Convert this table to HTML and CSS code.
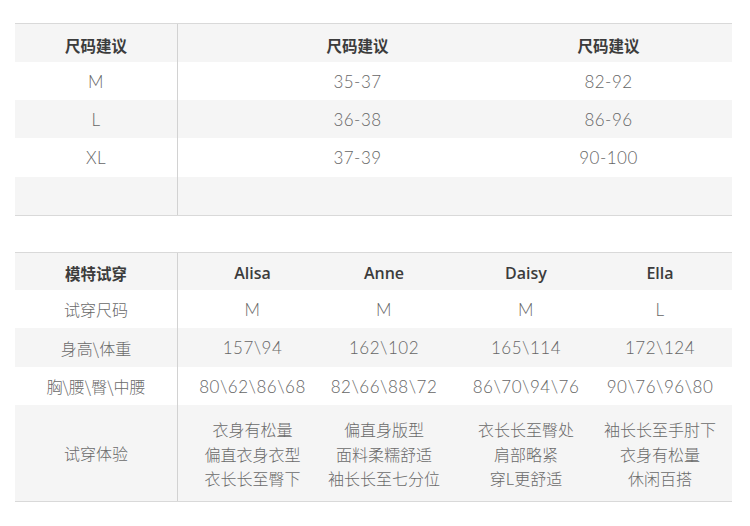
FILE: index.html
```html
<!DOCTYPE html>
<html lang="zh">
<head>
<meta charset="utf-8">
<link rel="stylesheet" href="styles.css">
</head>
<body>
<div class="page">
  <div class="table size-table">
    <div class="row head gray">
      <div class="cell label">尺码建议</div>
      <div class="cell">尺码建议</div>
      <div class="cell c3">尺码建议</div>
    </div>
    <div class="row">
      <div class="cell label num">M</div>
      <div class="cell num">35-37</div>
      <div class="cell c3 num">82-92</div>
    </div>
    <div class="row gray">
      <div class="cell label num">L</div>
      <div class="cell num">36-38</div>
      <div class="cell c3 num">86-96</div>
    </div>
    <div class="row tall">
      <div class="cell label num">XL</div>
      <div class="cell num">37-39</div>
      <div class="cell c3 num">90-100</div>
    </div>
    <div class="row gray">
      <div class="cell label"></div>
      <div class="cell"></div>
      <div class="cell c3"></div>
    </div>
  </div>

  <div class="table model-table">
    <div class="row head gray short">
      <div class="cell label">模特试穿</div>
      <div class="cell en">Alisa</div>
      <div class="cell en">Anne</div>
      <div class="cell en">Daisy</div>
      <div class="cell en c5">Ella</div>
    </div>
    <div class="row">
      <div class="cell label">试穿尺码</div>
      <div class="cell num">M</div>
      <div class="cell num">M</div>
      <div class="cell num">M</div>
      <div class="cell c5 num">L</div>
    </div>
    <div class="row gray tall">
      <div class="cell label">身高\体重</div>
      <div class="cell num">157\94</div>
      <div class="cell num">162\102</div>
      <div class="cell num">165\114</div>
      <div class="cell c5 num">172\124</div>
    </div>
    <div class="row">
      <div class="cell label">胸\腰\臀\中腰</div>
      <div class="cell num">80\62\86\68</div>
      <div class="cell num">82\66\88\72</div>
      <div class="cell num">86\70\94\76</div>
      <div class="cell c5 num">90\76\96\80</div>
    </div>
    <div class="row gray exp">
      <div class="cell label">试穿体验</div>
      <div class="cell multi">衣身有松量<br>偏直衣身衣型<br>衣长长至臀下</div>
      <div class="cell multi">偏直身版型<br>面料柔糯舒适<br>袖长长至七分位</div>
      <div class="cell multi">衣长长至臀处<br>肩部略紧<br>穿L更舒适</div>
      <div class="cell multi c5">袖长长至手肘下<br>衣身有松量<br>休闲百搭</div>
    </div>
  </div>
</div>
</body>
</html>
```

FILE: styles.css
```css
html, body {
  margin: 0;
  padding: 0;
  background: #ffffff;
}

.page {
  width: 750px;
  height: 526px;
  padding: 23px 18px 0 15px;
  box-sizing: border-box;
  display: flex;
  flex-direction: column;
  gap: 36px;
  font-family: "Noto Sans CJK SC", sans-serif;
  font-weight: 300;
  font-size: 16px;
  color: #6a6a6a;
}

.table {
  border-top: 1px solid #d9d9d9;
  border-bottom: 1px solid #d9d9d9;
}

.row {
  display: grid;
  height: 38px;
}

.row.tall { height: 39px; }
.row.short { height: 37px; }
.row.exp { height: 96px; }

.size-table .row {
  grid-template-columns: 163px 359px 195px;
}

.model-table .row {
  grid-template-columns: 163px 149px 114px 170px 121px;
}

.gray {
  background: #f5f5f5;
}

.cell {
  display: flex;
  align-items: center;
  justify-content: center;
  white-space: nowrap;
  text-align: center;
}

.cell.label {
  border-right: 1px solid #d2d2d2;
}

.cell.num {
  font-family: Lato, "Noto Sans CJK SC", sans-serif;
  font-weight: 300;
  font-size: 17px;
  letter-spacing: 0.5px;
  color: #666666;
}

.size-table .c3 {
  padding-right: 52px;
}

.model-table .c5 {
  padding-right: 23px;
}

.head .cell {
  font-family: "Noto Sans CJK SC", sans-serif;
  font-weight: 700;
  color: #3c3c3c;
  font-size: 15.5px;
  padding-top: 3px;
}

.head .cell.en {
  font-family: "Open Sans", "Noto Sans CJK SC", sans-serif;
  font-weight: 600;
  font-size: 16px;
}

.multi {
  line-height: 24.5px;
  padding-top: 2px;
}
```
